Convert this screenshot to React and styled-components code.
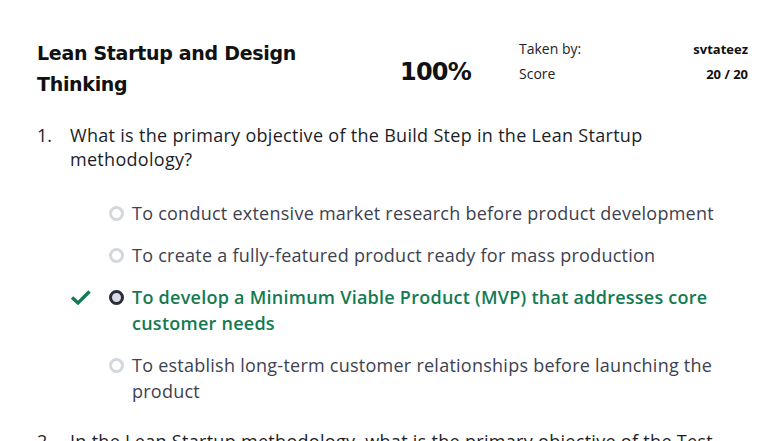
import React from "react"
import styled, { createGlobalStyle } from "styled-components"

const Global = createGlobalStyle`
  html, body {
    margin: 0;
    padding: 0;
    background: #ffffff;
    overflow: hidden;
  }
  body {
    font-family: "Open Sans", "Lato", sans-serif;
    color: #1b1e28;
  }
`

const questions = [
  {
    text: "What is the primary objective of the Build Step in the Lean Startup methodology?",
    options: [
      { text: "To conduct extensive market research before product development" },
      { text: "To create a fully-featured product ready for mass production" },
      { text: "To develop a Minimum Viable Product (MVP) that addresses core customer needs", correct: true },
      { text: "To establish long-term customer relationships before launching the product" },
    ],
  },
  {
    text: "In the Lean Startup methodology, what is the primary objective of the Test Step?",
    options: [],
  },
]

export default function App() {
  return (
    <Page>
      <Global />
      <Header>
        <Title>Lean Startup and Design Thinking</Title>
        <Percent>100%</Percent>
        <Meta>
          <MetaLabel>Taken by:</MetaLabel>
          <MetaValue>svtateez</MetaValue>
          <MetaLabel>Score</MetaLabel>
          <MetaValue>20 / 20</MetaValue>
        </Meta>
      </Header>
      {questions.map((q, i) => (
        <Question key={i}>
          <Number>{i + 1}.</Number>
          <div>
            <QuestionText>{q.text}</QuestionText>
            {q.options.length > 0 && (
              <Options>
                {q.options.map((o, j) => (
                  <Option key={j}>
                    <Check>
                      {o.correct && (
                        <svg width="21" height="17" viewBox="0 0 21 17">
                          <path d="M2 8.5 L8 14 L19.5 2.5" fill="none" stroke="#137a52" strokeWidth="3.4" />
                        </svg>
                      )}
                    </Check>
                    <Radio correct={o.correct} />
                    <OptionText correct={o.correct}>{o.text}</OptionText>
                  </Option>
                ))}
              </Options>
            )}
          </div>
        </Question>
      ))}
    </Page>
  )
}

let Page = styled.div`
  width: 784px;
  height: 441px;
  box-sizing: border-box;
  padding: 38px 36px 0 37px;
  overflow: hidden;
`

let Header = styled.div`
  display: flex;
  align-items: flex-start;
  margin-bottom: 23px;
`

let Title = styled.h1`
  margin: 0;
  width: 300px;
  font-family: "DejaVu Sans", sans-serif;
  font-weight: 700;
  font-size: 19px;
  line-height: 31px;
  letter-spacing: -0.3px;
  color: #111111;
`

let Percent = styled.div`
  margin: 18px 0 0 63px;
  width: 119px;
  font-family: "DejaVu Sans", sans-serif;
  font-weight: 700;
  font-size: 24px;
  line-height: 32px;
  letter-spacing: -0.8px;
  color: #111111;
`

let Meta = styled.div`
  flex: 1;
  display: grid;
  grid-template-columns: 1fr auto;
  row-gap: 7px;
  margin-top: 2px;
`

let MetaLabel = styled.div`
  font-size: 14px;
  line-height: 18px;
  color: #222222;
`

let MetaValue = styled.div`
  font-size: 13px;
  font-weight: 700;
  line-height: 18px;
  text-align: right;
  color: #111111;
`

let Question = styled.div`
  display: grid;
  grid-template-columns: 33px 645px;
  margin-bottom: 25px;
`

let Number = styled.div`
  font-size: 18px;
  line-height: 24px;
  color: #1b1e28;
`

let QuestionText = styled.div`
  font-size: 18px;
  line-height: 24px;
  letter-spacing: 0.3px;
  color: #1b1e28;
`

let Options = styled.div`
  display: flex;
  flex-direction: column;
  gap: 16px;
  margin-top: 29px;
`

let Option = styled.div`
  display: flex;
  align-items: flex-start;
`

let Check = styled.div`
  flex: none;
  width: 39px;
  height: 26px;
  display: flex;
  align-items: center;
  svg { display: block; }
`

let Radio = styled.span`
  flex: none;
  width: 9px;
  height: 9px;
  margin: 6px 8px 0 0;
  border-radius: 50%;
  border: 3px solid ${(p) => (p.correct ? "#2a2d3a" : "#d3d7e0")};
  background: ${(p) => (p.correct ? "#d8dbe3" : "#ffffff")};
`

let OptionText = styled.div`
  width: 604px;
  font-size: 18px;
  line-height: 26px;
  letter-spacing: 0.25px;
  color: ${(p) => (p.correct ? "#137a52" : "#3d4150")};
  font-weight: ${(p) => (p.correct ? 600 : 400)};
`
